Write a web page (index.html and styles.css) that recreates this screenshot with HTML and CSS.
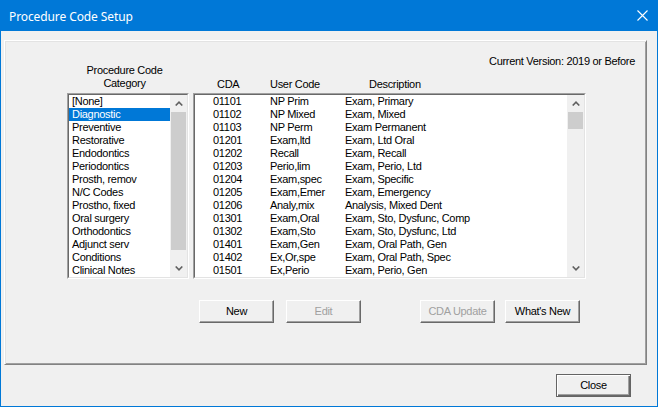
FILE: index.html
```html
<!DOCTYPE html>
<html>
<head>
<meta charset="utf-8">
<link rel="stylesheet" href="styles.css">
</head>
<body>
<div class="window">
  <div class="titlebar">
    <span class="title">Procedure Code Setup</span>
    <svg class="close-x" width="11" height="11" viewBox="0 0 11 11"><path d="M0.5 0.5 L10.5 10.5 M10.5 0.5 L0.5 10.5" stroke="#fff" stroke-width="1.1" fill="none"/></svg>
  </div>
  <div class="client">
    <div class="panel">
      <div class="version">Current Version: 2019 or Before</div>
      <div class="main">
        <div class="cat-label">Procedure Code<br>Category</div>
        <div class="col-heads"><span class="h-cda">CDA</span><span class="h-user">User Code</span><span class="h-desc">Description</span></div>
        <div class="listbox">
          <div class="listbox-inner">
            <ul class="items">
              <li>[None]</li>
              <li class="selected">Diagnostic</li>
              <li>Preventive</li>
              <li>Restorative</li>
              <li>Endodontics</li>
              <li>Periodontics</li>
              <li>Prosth, remov</li>
              <li>N/C Codes</li>
              <li>Prostho, fixed</li>
              <li>Oral surgery</li>
              <li>Orthodontics</li>
              <li>Adjunct serv</li>
              <li>Conditions</li>
              <li>Clinical Notes</li>
            </ul>
            <div class="vscroll">
              <div class="arrow"><svg width="8" height="5" viewBox="0 0 8 5"><polyline points="0.7,4.5 4,1.2 7.3,4.5" stroke="#606060" stroke-width="1.6" fill="none"/></svg></div>
              <div class="track"><div class="thumb thumb-long"></div></div>
              <div class="arrow"><svg width="8" height="5" viewBox="0 0 8 5"><polyline points="0.7,0.5 4,3.8 7.3,0.5" stroke="#606060" stroke-width="1.6" fill="none"/></svg></div>
            </div>
          </div>
        </div>
        <div class="listbox">
          <div class="listbox-inner">
            <div class="rows">
              <div class="row"><span>01101</span><span>NP Prim</span><span>Exam, Primary</span></div>
              <div class="row"><span>01102</span><span>NP Mixed</span><span>Exam, Mixed</span></div>
              <div class="row"><span>01103</span><span>NP Perm</span><span>Exam Permanent</span></div>
              <div class="row"><span>01201</span><span>Exam,ltd</span><span>Exam, Ltd Oral</span></div>
              <div class="row"><span>01202</span><span>Recall</span><span>Exam, Recall</span></div>
              <div class="row"><span>01203</span><span>Perio,lim</span><span>Exam, Perio, Ltd</span></div>
              <div class="row"><span>01204</span><span>Exam,spec</span><span>Exam, Specific</span></div>
              <div class="row"><span>01205</span><span>Exam,Emer</span><span>Exam, Emergency</span></div>
              <div class="row"><span>01206</span><span>Analy,mix</span><span>Analysis, Mixed Dent</span></div>
              <div class="row"><span>01301</span><span>Exam,Oral</span><span>Exam, Sto, Dysfunc, Comp</span></div>
              <div class="row"><span>01302</span><span>Exam,Sto</span><span>Exam, Sto, Dysfunc, Ltd</span></div>
              <div class="row"><span>01401</span><span>Exam,Gen</span><span>Exam, Oral Path, Gen</span></div>
              <div class="row"><span>01402</span><span>Ex,Or,spe</span><span>Exam, Oral Path, Spec</span></div>
              <div class="row"><span>01501</span><span>Ex,Perio</span><span>Exam, Perio, Gen</span></div>
            </div>
            <div class="vscroll">
              <div class="arrow"><svg width="8" height="5" viewBox="0 0 8 5"><polyline points="0.7,4.5 4,1.2 7.3,4.5" stroke="#606060" stroke-width="1.6" fill="none"/></svg></div>
              <div class="track"><div class="thumb thumb-short"></div></div>
              <div class="arrow"><svg width="8" height="5" viewBox="0 0 8 5"><polyline points="0.7,0.5 4,3.8 7.3,0.5" stroke="#606060" stroke-width="1.6" fill="none"/></svg></div>
            </div>
          </div>
        </div>
      </div>
      <div class="buttons">
        <button class="btn btn-new">New</button>
        <button class="btn btn-edit disabled">Edit</button>
        <button class="btn btn-cda disabled">CDA Update</button>
        <button class="btn btn-whats">What's New</button>
      </div>
    </div>
    <div class="footer">
      <button class="btn btn-default">Close</button>
    </div>
  </div>
</div>
</body>
</html>
```
FILE: styles.css
```css
* { box-sizing: border-box; }
html, body { margin: 0; padding: 0; }
body {
  background: #f0f0f0;
  font-family: "Liberation Sans", Arial, sans-serif;
  font-size: 11px;
  letter-spacing: -0.3px;
  color: #000;
}
.window {
  width: 658px;
  height: 407px;
  border: 1px solid #0078d7;
  background: #f0f0f0;
  display: flex;
  flex-direction: column;
}
.titlebar {
  height: 30px;
  background: #0078d7;
  display: flex;
  align-items: center;
  flex-shrink: 0;
}
.title {
  font-family: "Segoe UI", "Noto Sans", sans-serif;
  font-size: 12px;
  letter-spacing: -0.1px;
  color: #fff;
  padding-left: 8px;
  flex: 1;
}
.close-x {
  margin-right: 9px;
  align-self: flex-start;
  margin-top: 9px;
}
.client {
  flex: 1;
  display: flex;
  flex-direction: column;
}
.panel {
  width: 643px;
  height: 325px;
  margin: 9px 0 0 3px;
  border: 1px solid;
  border-color: #fff #828282 #828282 #fff;
  box-shadow: inset 1px 1px 0 #e3e3e3, inset -1px -1px 0 #a0a0a0;
}
.version {
  height: 23px;
  padding: 14px 11px 0 0;
  text-align: right;
  line-height: 13px;
  white-space: nowrap;
}
.main {
  display: grid;
  grid-template-columns: 122px 393px;
  column-gap: 4px;
  row-gap: 3px;
  margin-left: 62px;
}
.cat-label {
  text-align: center;
  line-height: 13px;
  padding-right: 7px;
}
.col-heads {
  align-self: end;
  line-height: 13px;
  padding-left: 24px;
  white-space: nowrap;
  margin-bottom: -1px;
}
.col-heads span { display: inline-block; }
.h-cda { width: 53px; }
.h-user { width: 99px; }
.listbox {
  height: 186px;
  border: 1px solid;
  border-color: #a0a0a0 #fff #fff #a0a0a0;
}
.listbox-inner {
  height: 184px;
  border: 1px solid;
  border-color: #696969 #e3e3e3 #e3e3e3 #696969;
  background: #fff;
  display: flex;
}
.items {
  list-style: none;
  margin: 0;
  padding: 0;
  flex: 1;
  overflow: hidden;
}
.items li {
  height: 13px;
  line-height: 13px;
  padding-left: 3px;
  white-space: nowrap;
}
.items li.selected {
  background: #0078d7;
  color: #fff;
}
.rows {
  flex: 1;
  overflow: hidden;
}
.row {
  display: grid;
  grid-template-columns: 57px 75px 1fr;
  height: 13px;
  line-height: 13px;
  padding-left: 18px;
  white-space: nowrap;
}
.vscroll {
  width: 17px;
  background: #f0f0f0;
  display: flex;
  flex-direction: column;
  flex-shrink: 0;
}
.arrow {
  height: 17px;
  display: flex;
  align-items: center;
  justify-content: center;
}
.arrow svg { display: block; }
.track {
  flex: 1;
  padding: 0 1px;
}
.thumb {
  background: #cdcdcd;
}
.thumb-long { height: 138px; }
.thumb-short { height: 17px; }
.buttons {
  display: flex;
  margin: 21px 0 0 194px;
}
.btn {
  width: 75px;
  height: 23px;
  padding: 0;
  margin: 0;
  font-family: "Liberation Sans", Arial, sans-serif;
  font-size: 11px;
  letter-spacing: -0.3px;
  color: #000;
  background: #f0f0f0;
  border: 1px solid;
  border-color: #fff #696969 #696969 #fff;
  box-shadow: inset -1px -1px 0 #a0a0a0;
  line-height: 13px;
}
.btn.disabled { color: #a0a0a0; }
.btn-edit { margin-left: 12px; }
.btn-cda { margin-left: 59px; }
.btn-whats { margin-left: 10px; }
.footer {
  display: flex;
  justify-content: flex-end;
  padding: 9px 26px 0 0;
}
.btn-default {
  border: 1px solid #646464;
  box-shadow: inset 1px 1px 0 #fff, inset -1px -1px 0 #696969, inset -2px -2px 0 #a0a0a0;
}
```
